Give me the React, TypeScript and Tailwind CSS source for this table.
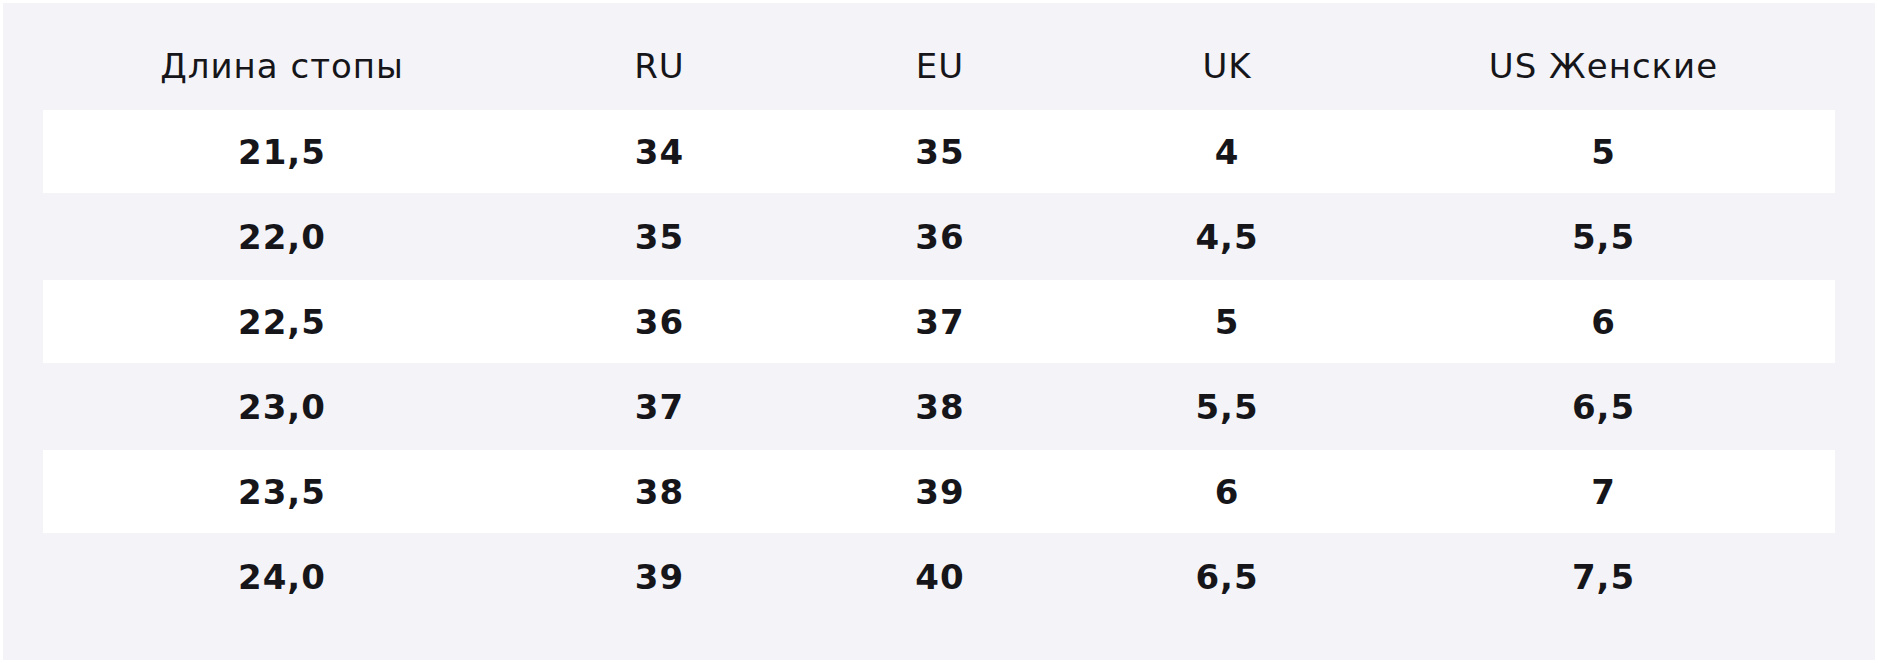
import React from "react";

const header = ["Длина стопы", "RU", "EU", "UK", "US Женские"];
const rows = [
  ["21,5", "34", "35", "4", "5"],
  ["22,0", "35", "36", "4,5", "5,5"],
  ["22,5", "36", "37", "5", "6"],
  ["23,0", "37", "38", "5,5", "6,5"],
  ["23,5", "38", "39", "6", "7"],
  ["24,0", "39", "40", "6,5", "7,5"],
];

export default function App() {
  return (
    <div className="w-[1878px] h-[663px] bg-white p-[3px] font-['DejaVu_Sans',sans-serif] text-[#16161a]">
      <div className="w-[1872px] h-[657px] bg-[#f4f4f8] px-[40px] pt-[20px] pb-[40px] flex flex-col">
        <div className="grid grid-cols-[478px_277px_284px_290px_463px] h-[87px] text-[34px] font-normal tracking-[1px]">
          {header.map((h) => (
            <div key={h} className="flex items-center justify-center">
              {h}
            </div>
          ))}
        </div>
        {rows.map((r, i) => (
          <div
            key={i}
            className={
              i % 2 === 0
                ? "grid grid-cols-[478px_277px_284px_290px_463px] h-[83px] bg-white text-[34px] font-bold tracking-[1px]"
                : "grid grid-cols-[478px_277px_284px_290px_463px] h-[87px] text-[34px] font-bold tracking-[1px]"
            }
          >
            {r.map((c, j) => (
              <div key={j} className="flex items-center justify-center pt-[2px]">
                {c}
              </div>
            ))}
          </div>
        ))}
      </div>
    </div>
  );
}
